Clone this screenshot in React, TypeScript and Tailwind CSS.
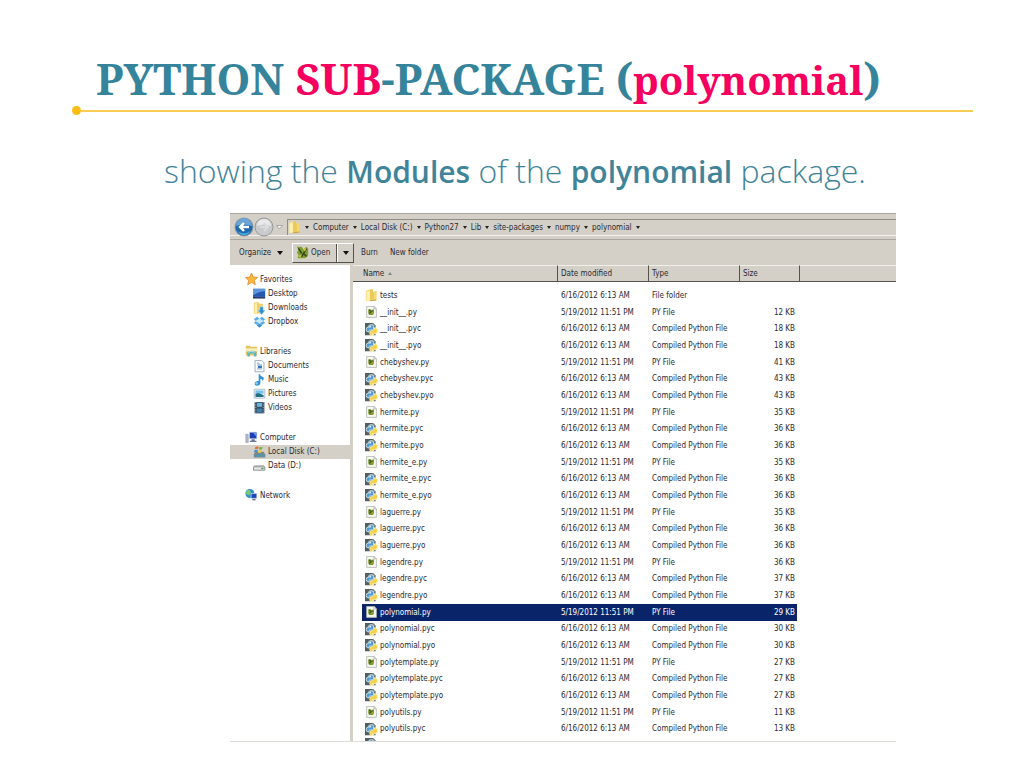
import type { ReactNode } from "react";

type FileKind = "folder" | "py" | "pyc";

type FileRow = {
  name: string;
  kind: FileKind;
  size: string;
  selected?: boolean;
};

const crumbs = ["Computer", "Local Disk (C:)", "Python27", "Lib", "site-packages", "numpy", "polynomial"];

const files: FileRow[] = [
  { name: "tests", kind: "folder", size: "" },
  { name: "__init__.py", kind: "py", size: "12 KB" },
  { name: "__init__.pyc", kind: "pyc", size: "18 KB" },
  { name: "__init__.pyo", kind: "pyc", size: "18 KB" },
  { name: "chebyshev.py", kind: "py", size: "41 KB" },
  { name: "chebyshev.pyc", kind: "pyc", size: "43 KB" },
  { name: "chebyshev.pyo", kind: "pyc", size: "43 KB" },
  { name: "hermite.py", kind: "py", size: "35 KB" },
  { name: "hermite.pyc", kind: "pyc", size: "36 KB" },
  { name: "hermite.pyo", kind: "pyc", size: "36 KB" },
  { name: "hermite_e.py", kind: "py", size: "35 KB" },
  { name: "hermite_e.pyc", kind: "pyc", size: "36 KB" },
  { name: "hermite_e.pyo", kind: "pyc", size: "36 KB" },
  { name: "laguerre.py", kind: "py", size: "35 KB" },
  { name: "laguerre.pyc", kind: "pyc", size: "36 KB" },
  { name: "laguerre.pyo", kind: "pyc", size: "36 KB" },
  { name: "legendre.py", kind: "py", size: "36 KB" },
  { name: "legendre.pyc", kind: "pyc", size: "37 KB" },
  { name: "legendre.pyo", kind: "pyc", size: "37 KB" },
  { name: "polynomial.py", kind: "py", size: "29 KB", selected: true },
  { name: "polynomial.pyc", kind: "pyc", size: "30 KB" },
  { name: "polynomial.pyo", kind: "pyc", size: "30 KB" },
  { name: "polytemplate.py", kind: "py", size: "27 KB" },
  { name: "polytemplate.pyc", kind: "pyc", size: "27 KB" },
  { name: "polytemplate.pyo", kind: "pyc", size: "27 KB" },
  { name: "polyutils.py", kind: "py", size: "11 KB" },
  { name: "polyutils.pyc", kind: "pyc", size: "13 KB" },
];

const kinds = {
  folder: { type: "File folder", date: "6/16/2012 6:13 AM" },
  py: { type: "PY File", date: "5/19/2012 11:51 PM" },
  pyc: { type: "Compiled Python File", date: "6/16/2012 6:13 AM" },
};

function Icon({ children }: { children: ReactNode }) {
  return (
    <svg viewBox="0 0 16 16" className="size-[13px] shrink-0" aria-hidden="true">
      {children}
    </svg>
  );
}

function FolderIcon() {
  return (
    <Icon>
      <path d="M1 2l6-2v14l-6 1z" fill="#f5dd84" />
      <path d="M6 1l4-1v4l4-1v10l-8 1z" fill="#ecc958" />
      <path d="M11 3l3-1v11l-3 1z" fill="#f3d876" />
      <path d="M2 3l4-1v12l-4 .500z" fill="#fdf0b0" />
      <path d="M6 14l8-1v1l-8 1z" fill="#c79a35" />
    </Icon>
  );
}

function PyIcon() {
  return (
    <Icon>
      <path d="M2 .5h9.500l2.500 3v10.500H2z" fill="#f7f8f0" stroke="#b3b6ac" />
      <path d="M11 .5v3h3" fill="#dde" stroke="#b3b6ac" />
      <path d="M4 4h3l1 1 3-1v5l-1 2H5l-1-2z" fill="#7c9a35" />
      <path d="M5 5l4 3M5 9l5-3" stroke="#3f571d" strokeWidth="1.400" />
      <path d="M8 7h2v2H8z" fill="#b6a63a" />
    </Icon>
  );
}

function PycIcon() {
  return (
    <Icon>
      <path d="M0 0h10l3 3v12H0z" fill="#53605f" />
      <path d="M9 0l4 4H9z" fill="#8b9795" />
      <path
        d="M4.500 5V4q0-2 3-2t3 2v3q0 1.500-1.500 1.500H6.500Q5 8.500 5 10v1H4q-2.500 0-2.500-3T4 5h3.500"
        fill="#4f9bd2"
        stroke="#dcecf4"
      />
      <path
        d="M11 6h1.500q3 0 3 3.500T12.500 13H11v.500q0 2-2.500 2T6 13.500V11q0-1.500 1.500-1.500H10q1 0 1-1.500z"
        fill="#f6d23f"
        stroke="#fff6ca"
      />
      <circle cx="6.500" cy="4" r=".8" fill="#fff" />
      <circle cx="9.500" cy="13.500" r=".8" fill="#fff" />
    </Icon>
  );
}

function FileIcon({ kind }: { kind: FileKind }) {
  if (kind === "folder") return <FolderIcon />;
  return kind === "py" ? <PyIcon /> : <PycIcon />;
}

const sidebar: { label: string; icon: ReactNode; items: { label: string; icon: ReactNode; active?: boolean }[] }[] = [
  {
    label: "Favorites",
    icon: <path d="M8 0l2 5 5.500.500-4 3.500 1.200 5.500L8 11.500 3.300 14.500l1.200-5.500-4-3.500L6 5z" fill="#fbb83c" stroke="#e0872a" />,
    items: [
      {
        label: "Desktop",
        icon: (
          <>
            <path d="M0 1h15v10H0z" fill="#2459b0" />
            <path d="M0 1h15v3Q8 4 0 9z" fill="#5d96df" />
            <path d="M0 11h15v2H0z" fill="#2c3e66" />
          </>
        ),
      },
      {
        label: "Downloads",
        icon: (
          <>
            <path d="M1 1l5-1 2 2h4v12H1z" fill="#f0d065" />
            <path d="M2 2l3-1v12l-3 1z" fill="#fbeeb0" />
            <path d="M8.500 6h4v4H15l-4.500 5.500L6 10h2.500z" fill="#2f8fd3" stroke="#a9dbf4" strokeWidth=".7" />
          </>
        ),
      },
      {
        label: "Dropbox",
        icon: (
          <>
            <path d="M5 1l3 2.500L3.500 6 1 4zM11 1L8 3.500 12.500 6 15 4zM1 8.500L3.500 6 8 8.800 5 11zM15 8.500L12.500 6 8 8.800 11 11z" fill="#58aee8" />
            <path d="M4.500 11.500L8 9.500l3.500 2L8 14.500z" fill="#3b8fd5" />
            <path d="M8 3.500L12.500 6 8 8.800 3.500 6z" fill="#c9e7fa" />
          </>
        ),
      },
    ],
  },
  {
    label: "Libraries",
    icon: (
      <>
        <path d="M1 1h5l1 1h8v11H1z" fill="#e6c45d" />
        <path d="M1 4h14v4H1z" fill="#f9eeb5" />
        <path d="M3 14V9q1-2 5-2t6 2v5h-3v-3q-3-2-5 0v3z" fill="#5bb6c4" />
        <path d="M4 9q4-3 8 0" stroke="#d5f3f5" fill="none" />
      </>
    ),
    items: [
      {
        label: "Documents",
        icon: (
          <>
            <path d="M2.500.5h8l3 3v11h-11z" fill="#f8fbfe" stroke="#8b9db2" />
            <path d="M5 4h3M5 6h6M5 11h6" stroke="#7b9cc4" />
            <path d="M6 7h5v3H6z" fill="#3675b8" />
          </>
        ),
      },
      {
        label: "Music",
        icon: (
          <>
            <path d="M8 0q1 3 5 4 1 3-1 5 0-3-3-3v6q-1 2.500-4 2.500T2 12t3.500-3.500H7V0z" fill="#2f91d4" />
            <circle cx="4.500" cy="11.500" r="1.500" fill="#8fd0f4" />
          </>
        ),
      },
      {
        label: "Pictures",
        icon: (
          <>
            <path d="M1.500 1.500h13v11h-13z" fill="#f4fafe" stroke="#9ab2c4" />
            <path d="M3 3h10v4H3z" fill="#74c3ec" />
            <path d="M3 7l4-1 6 3v2H3z" fill="#256f86" />
          </>
        ),
      },
      {
        label: "Videos",
        icon: (
          <>
            <path d="M2 0h12v14H2z" fill="#344b60" />
            <path d="M5 1h6v5H5z" fill="#68b5df" />
            <path d="M5 8h6v5H5z" fill="#3c83b4" />
            <path d="M3.500 0v14M12.500 0v14" stroke="#b9cad5" strokeDasharray="1.500 1.500" />
          </>
        ),
      },
    ],
  },
  {
    label: "Computer",
    icon: (
      <>
        <path d="M1 4h3v10H1z" fill="#b7bdc9" stroke="#7a8397" strokeWidth=".6" />
        <path d="M5 1h10v9H5z" fill="#c7cfdf" />
        <path d="M6 2h8v7H6z" fill="#1c3fb4" />
        <path d="M10 2h4v5z" fill="#6e98ef" />
        <path d="M8 10h4v2h2v1.500H6V12h2z" fill="#6c7591" />
      </>
    ),
    items: [
      {
        label: "Local Disk (C:)",
        active: true,
        icon: (
          <>
            <path d="M1 10l2-3h10l2 3v4H1z" fill="#768992" />
            <path d="M2 11h13v2H2z" fill="#4b98b0" />
            <path d="M3 1q2-1 4 0L6 4Q4 3 2 4z" fill="#e66c35" />
            <path d="M8 1q2 1 4 0l-1 3q-2 1-4 0z" fill="#73b63d" />
            <path d="M2 5q2-1 4 0L5 8Q3 7 1 8z" fill="#468ccc" />
            <path d="M7 5q2 1 4 0l-1 3q-2 1-4 0z" fill="#f0c83c" />
          </>
        ),
      },
      {
        label: "Data (D:)",
        icon: (
          <>
            <path d="M0 9l2-3h11l2 3v4H0z" fill="#bdc1c1" />
            <path d="M.5 8.500h14v4H.5z" fill="#e6e8e7" stroke="#888e8e" />
            <path d="M10 10.500h3" stroke="#5b9b50" strokeWidth="1.500" />
          </>
        ),
      },
    ],
  },
  {
    label: "Network",
    icon: (
      <>
        <circle cx="6" cy="5.500" r="5.500" fill="#2e8fc9" />
        <path d="M3 1q4 0 4 3T4 8Q1 7 1 4z" fill="#76c874" />
        <path d="M7 5h8v7H7z" fill="#c7d1e5" />
        <path d="M8 6h6v5H8z" fill="#1d46b8" />
        <path d="M9 12h4v2H9z" fill="#6d7893" />
      </>
    ),
    items: [],
  },
];

function Caret() {
  return (
    <svg viewBox="0 0 4 3" className="h-[3px] w-1 shrink-0" aria-hidden="true">
      <path d="M0 0h4L2 3z" fill="#222" />
    </svg>
  );
}

function BigCaret() {
  return (
    <svg viewBox="0 0 6 4" className="h-1 w-1.5 shrink-0" aria-hidden="true">
      <path d="M0 0h6L3 4z" fill="#111" />
    </svg>
  );
}

function AddressBar() {
  return (
    <div className="mt-[5px] flex h-[17px] border-b border-[#f4f2ee]">
      <div className="flex w-[57px] shrink-0 items-center pl-1">
        <button type="button" aria-label="Back" className="-my-1 shrink-0">
          <svg viewBox="0 0 20 20" className="size-5">
            <circle cx="10" cy="10" r="9.500" fill="#8b9aa8" />
            <circle cx="10" cy="10" r="8.500" fill="#1f68ad" />
            <path d="M2 9a8 8 0 0 1 16 0q-8-3-16 0z" fill="#6ba4d4" />
            <path d="M4 14q6 5 12 0-2 4-6 4t-6-4z" fill="#47b5e8" />
            <path d="M15 10H6m4-4l-4 4 4 4" fill="none" stroke="#fff" strokeWidth="2.400" />
          </svg>
        </button>
        <button type="button" aria-label="Forward" className="-my-1 shrink-0">
          <svg viewBox="0 0 20 20" className="size-5">
            <circle cx="10" cy="10" r="9" fill="#c9cacb" stroke="#979897" />
            <path d="M3 9a7 7 0 0 1 14 0q-7-3-14 0z" fill="#e9e9e9" />
            <path d="M6 10h8m-4-4l4 4-4 4" fill="none" stroke="#dcdcdc" strokeWidth="2" />
          </svg>
        </button>
        <button type="button" aria-label="Recent pages" className="ml-0.5">
          <svg viewBox="0 0 7 5" className="h-[5px] w-[7px]">
            <path d="M.5.500h6L3.500 4z" fill="#f2f2f2" stroke="#999" strokeWidth=".8" />
          </svg>
        </button>
      </div>
      <nav
        aria-label="Address"
        className="flex min-w-0 flex-1 items-center gap-1 overflow-hidden border-t border-l border-[#8f8c85] whitespace-nowrap"
      >
        <FolderIcon />
        {/* path segments, each followed by its drop arrow */}
        <Caret />
        {crumbs.map((crumb) => (
          <span key={crumb} className="flex items-center gap-1">
            <a href="#">{crumb}</a>
            <Caret />
          </span>
        ))}
      </nav>
    </div>
  );
}

function Toolbar() {
  return (
    <div className="mt-[3px] flex h-[26px] items-center border-t border-[#aaa7a0] pl-[9px] whitespace-nowrap">
      <button type="button" className="flex w-[53px] items-center gap-1.5">
        Organize <BigCaret />
      </button>
      <div className="flex h-5 border-t border-r border-b border-l border-t-white border-r-[#55534f] border-b-[#55534f] border-l-white">
        <button type="button" className="flex w-[44px] items-center gap-0.5 border-r border-[#55534f] pl-[3px]">
          <Icon>
            <path d="M1 1h6l2 3 4-3 2 2v9l-4 3H2l1-4-2-3 2-3z" fill="#7f9f35" />
            <path d="M3 3l4 6m6-6L7 13m2-4l4 4" stroke="#2c4414" strokeWidth="1.800" />
            <path d="M9 4l4-2-2 5zM3 12l4-1-2 3z" fill="#dfc94c" />
          </Icon>
          Open
        </button>
        <button type="button" aria-label="Open with" className="flex w-4 items-center justify-center border-l border-white">
          <BigCaret />
        </button>
      </div>
      <button type="button" className="ml-[7px]">Burn</button>
      <button type="button" className="ml-3">New folder</button>
    </div>
  );
}

function Sidebar() {
  return (
    <nav
      aria-label="Folders"
      className="flex w-[123px] shrink-0 flex-col gap-[15px] border-r-[3px] border-[#d4d0c8] bg-white pt-[7px] whitespace-nowrap"
    >
      {sidebar.map((group) => (
        <div key={group.label}>
          <a href="#" className="flex h-[15px] items-center gap-0.5 pl-[15px]">
            <Icon>{group.icon}</Icon>
            {group.label}
          </a>
          {group.items.map((item) => (
            <a
              key={item.label}
              href="#"
              className={`flex h-[14px] items-center gap-0.5 pl-[23px] ${item.active ? "bg-[#d4d0c8]" : ""}`}
            >
              <Icon>{item.icon}</Icon>
              {item.label}
            </a>
          ))}
        </div>
      ))}
    </nav>
  );
}

function FileTable() {
  return (
    <table className="w-full table-fixed border-separate border-spacing-0 text-left whitespace-nowrap">
      <colgroup>
        <col className="w-[9px]" />
        <col className="w-[196px]" />
        <col className="w-[91px]" />
        <col className="w-[91px]" />
        <col className="w-[57px]" />
        <col className="w-[3px]" />
        <col />
      </colgroup>
      <thead className="bg-[#d4d0c8]">
        <tr className="h-[17px] *:border-t *:border-b *:border-t-[#f1efea] *:border-b-[#55534f] *:p-0 *:font-normal">
          <th colSpan={2} className="border-r border-r-[#55534f]">
            <span className="flex items-center gap-1 pl-2.5">
              Name
              <svg viewBox="0 0 4 3" className="h-[3px] w-1" aria-hidden="true">
                <path d="M0 3h4L2 0z" fill="#888" />
              </svg>
            </span>
          </th>
          <th className="border-r border-r-[#55534f]"><span className="pl-[3px]">Date modified</span></th>
          <th className="border-r border-r-[#55534f]"><span className="pl-[3px]">Type</span></th>
          <th colSpan={2} className="border-r border-r-[#55534f]"><span className="pl-[3px]">Size</span></th>
          <th />
        </tr>
      </thead>
      <tbody>
        <tr className="h-[5px]"><td colSpan={7} className="p-0" /></tr>
      </tbody>
      <tbody>
        {files.map((file) => (
          <tr
            key={file.name}
            className={`h-[17px] nth-[3n]:h-4 *:p-0 ${file.selected ? "text-white [&>td:nth-child(n+2):nth-child(-n+5)]:bg-[#0a246a]" : ""}`}
          >
            <td />
            <td>
              <span className="flex items-center gap-0.5 pl-[3px]">
                <FileIcon kind={file.kind} />
                {file.name}
              </span>
            </td>
            <td><span className="pl-[3px]">{kinds[file.kind].date}</span></td>
            <td><span className="pl-[3px]">{kinds[file.kind].type}</span></td>
            <td className="text-right"><span className="pr-0.5">{file.size}</span></td>
            <td />
            <td />
          </tr>
        ))}
      </tbody>
    </table>
  );
}

export default function App() {
  return (
    <main className="min-h-screen bg-white pb-6 font-['Open_Sans',sans-serif]">
      <header className="pt-[52px] pr-[51px] pl-[72px]">
        <h1 className="pl-6 font-['Noto_Serif','Droid_Serif','DejaVu_Serif_Condensed',serif] text-[43px] leading-[53px] font-bold whitespace-nowrap text-[#35849b]">
          PYTHON <span className="text-[#f5005f]">SUB</span>-PACKAGE (
          <span className="text-[40px] text-[#f5005f]">polynomial</span>)
        </h1>
        <div className="flex items-center">
          <span className="size-[9px] rounded-full bg-[#fbbc14]" />
          <span className="h-0.5 flex-1 bg-[#f8cb52]" />
        </div>
      </header>

      <p className="mt-8 pl-[164px] text-[32px] leading-[48px] font-light whitespace-nowrap text-[#3f8499]">
        showing the <b className="text-[30px] font-semibold">Modules</b> of the{" "}
        <b className="text-[30px] font-semibold">polynomial</b> package.
      </p>

      <section className="mt-[17px] mr-32 ml-[230px] border-t border-b border-t-[#aaa7a0] border-b-[#dddbd6] bg-[#d4d0c8] font-['DejaVu_Sans_Condensed','DejaVu_Sans',sans-serif] text-[8px] leading-3 text-[#2a2a30]">
        <AddressBar />
        <Toolbar />
        <div className="flex">
          <Sidebar />
          <div className="min-w-0 flex-1 bg-white">
            <FileTable />
            {/* top edge of the next row, cut off by the window */}
            <div className="mt-px h-[3px] overflow-hidden pl-3">
              <PycIcon />
            </div>
          </div>
        </div>
      </section>
    </main>
  );
}
